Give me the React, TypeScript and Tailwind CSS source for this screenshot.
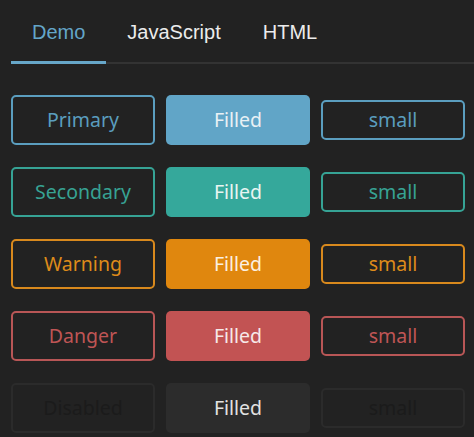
import { useState } from "react";

type Variant = {
  label: string;
  outline: string;
  filled: string;
  small: string;
};

const variants: Variant[] = [
  {
    label: "Primary",
    outline: "border-[#5b9ebf] text-[#5a9dbe]",
    filled: "bg-[#61a5c7] text-[#e9f1f5]",
    small: "border-[#5b9ebf] text-[#5a9dbe]",
  },
  {
    label: "Secondary",
    outline: "border-[#36a395] text-[#37a394]",
    filled: "bg-[#35a89b] text-[#e8f5f2]",
    small: "border-[#36a395] text-[#37a394]",
  },
  {
    label: "Warning",
    outline: "border-[#d8891d] text-[#de8b1a]",
    filled: "bg-[#e0870e] text-[#fbf0e2]",
    small: "border-[#d8891d] text-[#de8b1a]",
  },
  {
    label: "Danger",
    outline: "border-[#b85656] text-[#bf5555]",
    filled: "bg-[#c25353] text-[#f6e9e9]",
    small: "border-[#b85656] text-[#bf5555]",
  },
  {
    label: "Disabled",
    outline: "border-[#2b2b2b] text-[#1b1b1b]",
    filled: "bg-[#2c2c2c] text-[#e2e2e2]",
    small: "border-[#2b2b2b] text-[#1b1b1b]",
  },
];

const tabs = ["Demo", "JavaScript", "HTML"];

const App = () => {
  const [active, setActive] = useState("Demo");

  return (
    <div className="min-h-[437px] w-[474px] bg-[#222222] font-['Noto_Sans',sans-serif]">
      <div className="ml-[11px] flex border-b-2 border-[#333333] font-['Liberation_Sans',Arial,sans-serif] text-[20px]">
        {tabs.map((t) => (
          <button
            key={t}
            onClick={() => setActive(t)}
            className={
              t === active
                ? "-mb-[2px] border-b-[3px] border-[#67a7c9] px-[21px] pt-[18px] pb-[15px] leading-[28px] text-[#64a6c9]"
                : "-mb-[2px] border-b-[3px] border-transparent px-[21px] pt-[18px] pb-[15px] leading-[28px] text-[#ececec]"
            }
          >
            {t}
          </button>
        ))}
      </div>

      <div className="mx-[11px] mt-[31px] grid w-[454px] grid-cols-3 gap-x-[11px] gap-y-[22px] text-[19.5px]">
        {variants.map((v) => (
          <div key={v.label} className="contents">
            <button className={`h-[50px] rounded-[5px] border-2 ${v.outline}`}>{v.label}</button>
            <button className={`h-[50px] rounded-[5px] ${v.filled}`}>Filled</button>
            <button className={`h-[40px] self-center rounded-[5px] border-2 ${v.small}`}>small</button>
          </div>
        ))}
      </div>
    </div>
  );
};

export default App;
